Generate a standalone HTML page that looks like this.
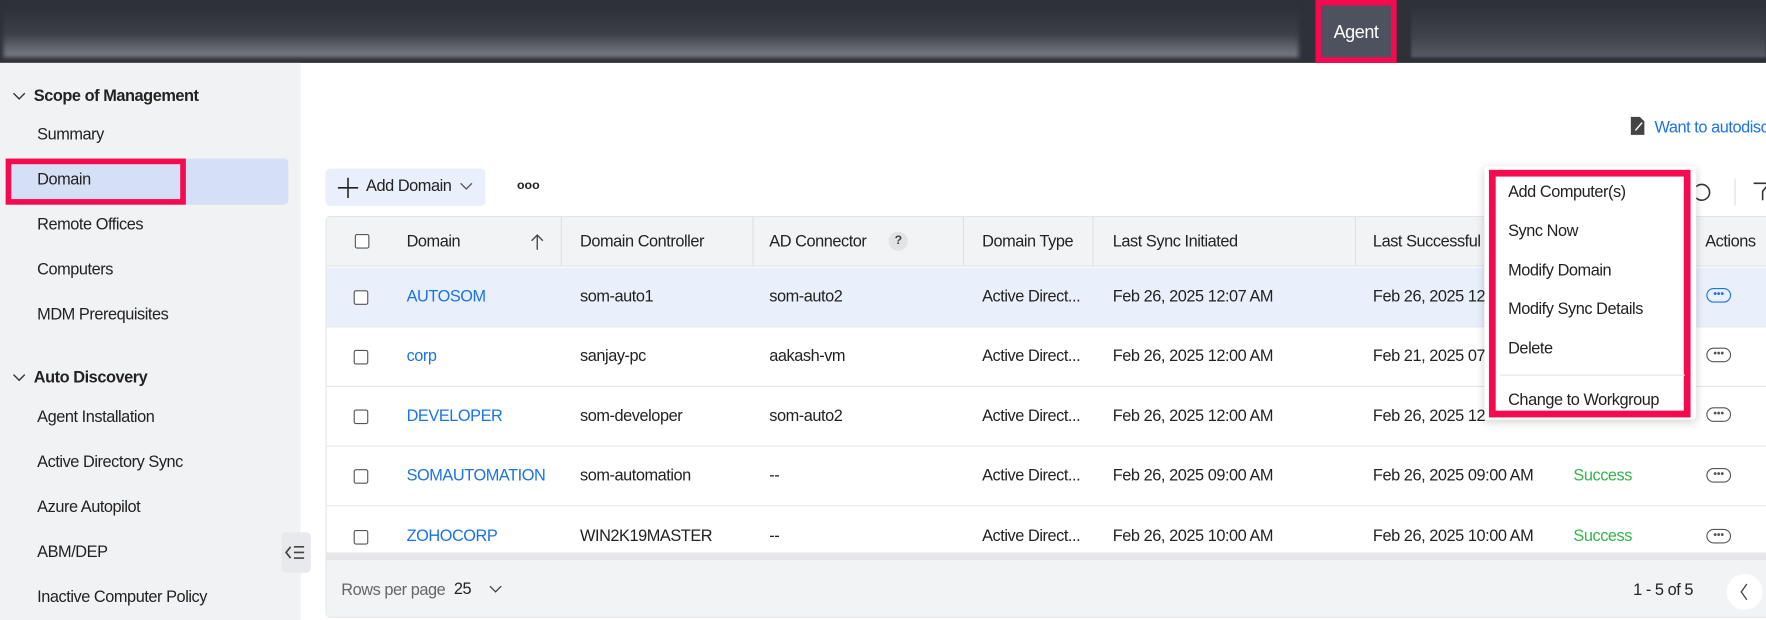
<!DOCTYPE html>
<html><head><meta charset="utf-8"><style>
*{box-sizing:border-box;margin:0;padding:0}
html,body{width:1766px;height:619px;overflow:hidden;background:#fff}
#w{position:absolute;left:0;top:1px;width:1568px;height:550px;transform:scale(1.12628,1.1254);transform-origin:0 0;font-family:"Liberation Sans",sans-serif;font-size:14.5px;color:#222;letter-spacing:-0.4px}
.a{position:absolute;white-space:nowrap}
.t{position:absolute;white-space:nowrap;transform:translateY(-50%)}
.cb{position:absolute;width:13px;height:13px;border:1.3px solid #555;border-radius:2px;background:#fff}
.blue{color:#1a73e8}
.clip{overflow:hidden;width:100px}
.dots{position:absolute;width:22px;height:13px;border:1.6px solid #555;border-radius:7px;font-size:9px;line-height:8px;text-align:center;color:#555;font-weight:bold;letter-spacing:0}
</style></head><body><div id="w">
<!-- header -->
<div class="a" style="left:0;top:-1px;width:1568px;height:56px;background:#2f3139"></div>
<div class="a" style="left:3px;top:4px;width:1150px;height:46px;background:linear-gradient(180deg,#2e3038 0%,#3c3f48 55%,#7d8086 100%);filter:blur(2px)"></div>
<div class="a" style="left:1253px;top:5px;width:315px;height:45px;background:linear-gradient(180deg,#30323a,#40434b 60%,#595b62);filter:blur(1px)"></div>
<div class="a" style="left:1168px;top:-1px;width:72px;height:56px;border:5px solid #f50a50;background:#4e525e;color:#fff;font-size:16px;text-align:center;line-height:50px">Agent</div>
<!-- sidebar -->
<div class="a" style="left:0;top:55px;width:267px;height:495px;background:#f1f2f4"></div>
<svg class="a" style="left:11px;top:80px" width="12" height="10"><path d="M1 2l5 5 5-5" stroke="#333" fill="none" stroke-width="1.2"/></svg>
<div class="t" style="left:30px;top:85px;font-weight:bold">Scope of Management</div>
<div class="t" style="left:33px;top:119px">Summary</div>
<div class="a" style="left:8px;top:140px;width:248px;height:41px;background:#d5e0f7;border-radius:4px"></div>
<div class="a" style="left:5px;top:140px;width:160px;height:41px;border:5px solid #f50a50"></div>
<div class="t" style="left:33px;top:159px">Domain</div>
<div class="t" style="left:33px;top:199px">Remote Offices</div>
<div class="t" style="left:33px;top:239px">Computers</div>
<div class="t" style="left:33px;top:279px">MDM Prerequisites</div>
<svg class="a" style="left:11px;top:330px" width="12" height="10"><path d="M1 2l5 5 5-5" stroke="#333" fill="none" stroke-width="1.2"/></svg>
<div class="t" style="left:30px;top:335px;font-weight:bold">Auto Discovery</div>
<div class="t" style="left:33px;top:370px">Agent Installation</div>
<div class="t" style="left:33px;top:410px">Active Directory Sync</div>
<div class="t" style="left:33px;top:450px">Azure Autopilot</div>
<div class="t" style="left:33px;top:490px">ABM/DEP</div>
<div class="t" style="left:33px;top:530px">Inactive Computer Policy</div>
<div class="a" style="left:250px;top:472px;width:26px;height:36px;background:#e8e9ec;border-radius:4px"></div>
<svg class="a" style="left:252px;top:482px" width="20" height="16"><path d="M6 3l-4 5 4 5M9 3h9M9 8h9M9 13h9" stroke="#444" fill="none" stroke-width="1.5"/></svg>
<!-- main top -->
<svg class="a" style="left:1446px;top:102px" width="16" height="18"><path d="M2 1h8l4 4v12H2z" fill="#444"/><path d="M6 13l6-7" stroke="#fff" stroke-width="1.3"/></svg>
<div class="t blue" style="left:1469px;top:113px">Want to autodiscover</div>
<div class="a" style="left:289px;top:149px;width:142px;height:33px;background:#e9effb;border-radius:4px"></div>
<svg class="a" style="left:299px;top:156px" width="20" height="20"><path d="M10 1v18M1 10h18" stroke="#222" stroke-width="1.4"/></svg>
<div class="t" style="left:325px;top:165px">Add Domain</div>
<svg class="a" style="left:408px;top:161px" width="12" height="8"><path d="M1 1l5 5 5-5" stroke="#555" fill="none" stroke-width="1.2"/></svg>
<div class="t" style="left:459px;top:164px;font-size:11px;font-weight:bold;letter-spacing:0">ooo</div>
<svg class="a" style="left:1502px;top:160px" width="18" height="20"><path d="M4 5a7 7 0 1 1 0 10" stroke="#333" fill="none" stroke-width="1.4"/></svg>
<div class="a" style="left:1540px;top:158px;width:1px;height:24px;background:#ddd"></div>
<svg class="a" style="left:1556px;top:160px" width="14" height="20"><path d="M1 2h14l-6 7v8" stroke="#333" fill="none" stroke-width="1.4"/></svg>
<!-- table -->
<div class="a" style="left:289px;top:191px;width:1290px;height:357px;border:1px solid #e3e4e7;border-radius:4px"></div>
<div class="a" style="left:290px;top:192px;width:1290px;height:44px;background:#f2f3f5;border-bottom:1px solid #e3e4e7"></div>
<div class="a" style="left:498px;top:192px;width:1px;height:44px;background:#e0e1e4"></div>
<div class="a" style="left:668px;top:192px;width:1px;height:44px;background:#e0e1e4"></div>
<div class="a" style="left:855px;top:192px;width:1px;height:44px;background:#e0e1e4"></div>
<div class="a" style="left:970px;top:192px;width:1px;height:44px;background:#e0e1e4"></div>
<div class="a" style="left:1203px;top:192px;width:1px;height:44px;background:#e0e1e4"></div>
<div class="cb" style="left:315px;top:207px"></div>
<div class="t" style="left:361px;top:214px">Domain</div>
<svg class="a" style="left:471px;top:206px" width="12" height="16"><path d="M6 15V2M1 7l5-5 5 5" stroke="#444" fill="none" stroke-width="1.2"/></svg>
<div class="t" style="left:515px;top:214px">Domain Controller</div>
<div class="t" style="left:683px;top:214px">AD Connector</div>
<div class="a" style="left:789px;top:205px;width:17px;height:17px;border-radius:50%;background:#e2e3e7;font-size:11px;text-align:center;line-height:17px;font-weight:bold;color:#444">?</div>
<div class="t" style="left:872px;top:214px">Domain Type</div>
<div class="t" style="left:988px;top:214px">Last Sync Initiated</div>
<div class="t" style="left:1219px;top:214px">Last Successful Sync</div>
<div class="t" style="left:1514px;top:214px">Actions</div>
<!-- rows -->
<div class="a" style="left:290px;top:237px;width:1280px;height:52px;background:#e9effb"></div>
<div class="a" style="left:290px;top:289px;width:1280px;height:1px;background:#e6e7ea"></div>
<div class="a" style="left:290px;top:342px;width:1280px;height:1px;background:#e6e7ea"></div>
<div class="a" style="left:290px;top:395px;width:1280px;height:1px;background:#e6e7ea"></div>
<div class="a" style="left:290px;top:448px;width:1280px;height:1px;background:#e6e7ea"></div>

<div class="cb" style="left:314px;top:257px"></div><div class="t blue" style="left:361px;top:263px">AUTOSOM</div><div class="t" style="left:515px;top:263px">som-auto1</div><div class="t" style="left:683px;top:263px">som-auto2</div><div class="t" style="left:872px;top:263px">Active Direct...</div><div class="t" style="left:988px;top:263px">Feb 26, 2025 12:07 AM</div><div class="t clip" style="left:1219px;top:263px">Feb 26, 2025 12:07 AM</div>
<div class="dots" style="left:1515px;top:255px;border-color:#1a73e8;color:#1a73e8">•••</div>

<div class="cb" style="left:314px;top:310px"></div><div class="t blue" style="left:361px;top:316px">corp</div><div class="t" style="left:515px;top:316px">sanjay-pc</div><div class="t" style="left:683px;top:316px">aakash-vm</div><div class="t" style="left:872px;top:316px">Active Direct...</div><div class="t" style="left:988px;top:316px">Feb 26, 2025 12:00 AM</div><div class="t clip" style="left:1219px;top:316px">Feb 21, 2025 07:00 AM</div>
<div class="dots" style="left:1515px;top:308px">•••</div>

<div class="cb" style="left:314px;top:363px"></div><div class="t blue" style="left:361px;top:369px">DEVELOPER</div><div class="t" style="left:515px;top:369px">som-developer</div><div class="t" style="left:683px;top:369px">som-auto2</div><div class="t" style="left:872px;top:369px">Active Direct...</div><div class="t" style="left:988px;top:369px">Feb 26, 2025 12:00 AM</div><div class="t clip" style="left:1219px;top:369px">Feb 26, 2025 12:00 AM</div>
<div class="dots" style="left:1515px;top:361px">•••</div>

<div class="cb" style="left:314px;top:416px"></div><div class="t blue" style="left:361px;top:422px">SOMAUTOMATION</div><div class="t" style="left:515px;top:422px">som-automation</div><div class="t" style="left:683px;top:422px">--</div><div class="t" style="left:872px;top:422px">Active Direct...</div><div class="t" style="left:988px;top:422px">Feb 26, 2025 09:00 AM</div><div class="t" style="left:1219px;top:422px">Feb 26, 2025 09:00 AM</div><div class="t" style="left:1397px;top:422px;color:#34b44a">Success</div>
<div class="dots" style="left:1515px;top:415px">•••</div>

<div class="cb" style="left:314px;top:470px"></div><div class="t blue" style="left:361px;top:476px">ZOHOCORP</div><div class="t" style="left:515px;top:476px">WIN2K19MASTER</div><div class="t" style="left:683px;top:476px">--</div><div class="t" style="left:872px;top:476px">Active Direct...</div><div class="t" style="left:988px;top:476px">Feb 26, 2025 10:00 AM</div><div class="t" style="left:1219px;top:476px">Feb 26, 2025 10:00 AM</div><div class="t" style="left:1397px;top:476px;color:#34b44a">Success</div>
<div class="dots" style="left:1515px;top:469px">•••</div>

<div class="a" style="left:290px;top:490px;width:1280px;height:7px;background:#e6e6e8"></div>
<div class="a" style="left:290px;top:497px;width:1280px;height:50px;background:#f2f3f5"></div>
<div class="t" style="left:303px;top:524px;color:#666">Rows per page</div>
<div class="t" style="left:403px;top:523px">25</div>
<svg class="a" style="left:434px;top:519px" width="12" height="8"><path d="M1 1l5 5 5-5" stroke="#444" fill="none" stroke-width="1.2"/></svg>
<div class="t" style="left:1450px;top:524px">1 - 5 of 5</div>
<div class="a" style="left:1533px;top:509px;width:32px;height:32px;border-radius:50%;background:#fff"></div>
<svg class="a" style="left:1544px;top:517px" width="10" height="16"><path d="M7 1L2 8l5 7" stroke="#444" fill="none" stroke-width="1.2"/></svg>
<!-- menu -->
<div class="a" style="left:1318px;top:147px;width:188px;height:225px;background:#fff;box-shadow:0 2px 8px rgba(0,0,0,.18);border-radius:3px"></div>
<div class="a" style="left:1322px;top:150px;width:179px;height:220px;border:6px solid #f50a50"></div>
<div class="t" style="left:1339px;top:170px">Add Computer(s)</div>
<div class="t" style="left:1339px;top:205px">Sync Now</div>
<div class="t" style="left:1339px;top:240px">Modify Domain</div>
<div class="t" style="left:1339px;top:274px">Modify Sync Details</div>
<div class="t" style="left:1339px;top:309px">Delete</div>
<div class="a" style="left:1332px;top:332px;width:164px;height:1px;background:#e3e3e3"></div>
<div class="t" style="left:1339px;top:355px">Change to Workgroup</div>
</div></body></html>
